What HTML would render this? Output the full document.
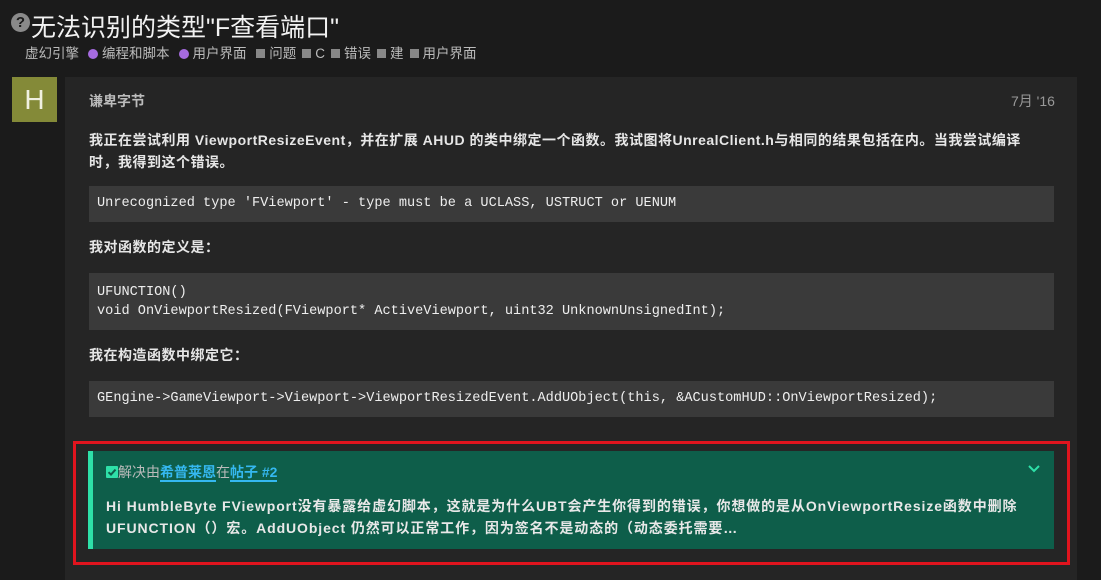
<!DOCTYPE html>
<html><head><meta charset="utf-8"><style>
body{margin:0;width:1101px;height:580px;background:#1b1b1b;font-family:"Liberation Sans","Noto Sans CJK SC",sans-serif;color:#e8e8e8;overflow:hidden;position:relative}
.a{position:absolute}
.code{position:absolute;left:89px;width:949px;background:#3a3a3a;font-family:"Liberation Mono","Noto Sans CJK SC",monospace;font-size:13.6px;color:#eee;padding:0 8px;box-sizing:content-box;white-space:nowrap}
.p{position:absolute;left:89px;font-size:14px;font-weight:bold;color:#e6e6e6;white-space:nowrap}
.sq{display:inline-block;width:9px;height:9px;background:#888;margin:0 4px 0 6px}
.dot{display:inline-block;width:10px;height:10px;border-radius:50%;background:#a66be0;margin:0 4px 0 9px;vertical-align:-1px}
</style></head><body>
<div class="a" style="left:11px;top:13px;width:19px;height:19px;border-radius:50%;background:#8a8a8a;color:#1b1b1b;font-size:15px;font-weight:bold;text-align:center;line-height:19px">?</div>
<div class="a" style="left:31px;top:8px;font-size:25px;color:#f2f2f2;white-space:nowrap">无法识别的类型"F查看端口"</div>
<div class="a" style="left:25px;top:42px;font-size:13.5px;color:#bbb;white-space:nowrap">虚幻引擎<span class="dot"></span>编程和脚本<span class="dot"></span>用户界面 <span class="sq"></span>问题<span class="sq"></span>C<span class="sq"></span>错误<span class="sq"></span>建<span class="sq"></span>用户界面</div>
<div class="a" style="left:12px;top:77px;width:45px;height:45px;background:#848a38;color:#f0f0e0;font-size:28px;text-align:center;line-height:45px">H</div>
<div class="a" style="left:65px;top:77px;width:1012px;height:503px;background:#252525"></div>
<div class="a" style="left:89px;top:91px;font-size:14px;font-weight:bold;color:#bbb">谦卑字节</div>
<div class="a" style="left:1011px;top:91px;font-size:14px;color:#999">7月 '16</div>
<div class="p" style="top:129px;line-height:22px;letter-spacing:0.5px">我正在尝试利用 ViewportResizeEvent，并在扩展 AHUD 的类中绑定一个函数。我试图将UnrealClient.h与相同的结果包括在内。当我尝试编译<br>时，我得到这个错误。</div>
<div class="code" style="top:186px;height:36px;line-height:36px">Unrecognized type 'FViewport' - type must be a UCLASS, USTRUCT or UENUM</div>
<div class="p" style="top:237px;letter-spacing:0.5px">我对函数的定义是：</div>
<div class="code" style="top:273px;height:57px;line-height:19px"><div style="padding-top:10px">UFUNCTION()<br>void OnViewportResized(FViewport* ActiveViewport, uint32 UnknownUnsignedInt);</div></div>
<div class="p" style="top:345px;letter-spacing:0.5px">我在构造函数中绑定它：</div>
<div class="code" style="top:381px;height:36px;line-height:36px">GEngine-&gt;GameViewport-&gt;Viewport-&gt;ViewportResizedEvent.AddUObject(this, &amp;ACustomHUD::OnViewportResized);</div>
<div class="a" style="left:73px;top:441px;width:991px;height:118px;border:3px solid #e0141e"></div>
<div class="a" style="left:88px;top:451px;width:966px;height:98px;background:#0e5e4a;border-left:5px solid #2ee0a8;box-sizing:border-box"></div>
<div class="a" style="left:106px;top:462px;font-size:14px;color:#bbb;white-space:nowrap;line-height:20px"><svg width="12" height="12" viewBox="0 0 12 12" style="vertical-align:-1px"><rect width="12" height="12" rx="1" fill="#2ee0a8"/><path d="M2.5 6.2 L5 8.6 L9.5 3.6" stroke="#0e5e4a" stroke-width="2" fill="none"/></svg>解决由<b style="color:#35b8f0;border-bottom:2px solid #35b8f0">希普莱恩</b>在<b style="color:#35b8f0;border-bottom:2px solid #35b8f0">帖子 #2</b></div>
<svg class="a" style="left:1027px;top:464px" width="14" height="10" viewBox="0 0 14 10"><path d="M2 2 L7 7 L12 2" stroke="#2ee0a8" stroke-width="2" fill="none"/></svg>
<div class="a" style="left:106px;top:495px;font-size:14px;font-weight:bold;color:#e8e8e8;line-height:22px;white-space:nowrap;letter-spacing:0.9px">Hi HumbleByte FViewport没有暴露给虚幻脚本，这就是为什么UBT会产生你得到的错误，你想做的是从OnViewportResize函数中删除<br>UFUNCTION（）宏。AddUObject 仍然可以正常工作，因为签名不是动态的（动态委托需要…</div>
</body></html>
